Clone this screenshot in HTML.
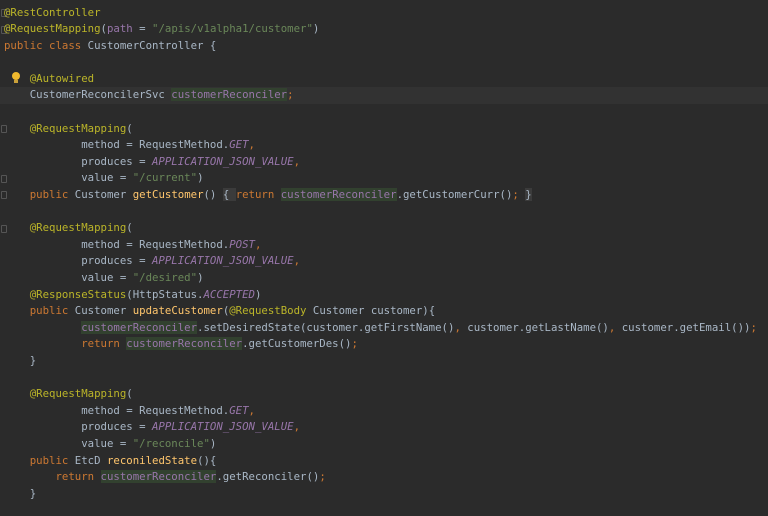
<!DOCTYPE html>
<html><head><meta charset="utf-8"><style>
html,body{margin:0;padding:0;background:#2b2b2b;width:768px;height:516px;overflow:hidden}
pre{position:absolute;left:4px;top:4.5px;margin:0;font-family:"DejaVu Sans Mono","Liberation Mono",monospace;font-size:10.7px;line-height:16.6px;color:#a9b7c6;white-space:pre}
.k{color:#cc7832}.a{color:#bbb529}.s{color:#6a8759}.f{color:#9876aa}.fi{color:#9876aa;font-style:italic}.m{color:#ffc66d}
.h{background:#32412f}.g{background:#3b3b3b}
.cur{position:absolute;left:0;top:87px;width:768px;height:16.6px;background:#323232}
.bulb{position:absolute;left:12px;top:72px;width:8px;height:8px;border-radius:50%;background:#f0b92e}
.bulb:after{content:"";position:absolute;left:2px;top:8px;width:4px;height:3px;background:#c9a03a}
.fold{position:absolute;left:1px;width:4px;height:6px;border:1px solid #555;border-radius:1px}
</style></head><body>
<div class="cur"></div>
<div class="bulb"></div>
<div class="fold" style="top:9px"></div><div class="fold" style="top:26px"></div>
<div class="fold" style="top:125px"></div><div class="fold" style="top:175px"></div>
<div class="fold" style="top:191px"></div><div class="fold" style="top:225px"></div>
<pre><span class="a">@RestController</span>
<span class="a">@RequestMapping</span>(<span class="f">path</span> = <span class="s">"/apis/v1alpha1/customer"</span>)
<span class="k">public class</span> CustomerController {

    <span class="a">@Autowired</span>
    CustomerReconcilerSvc <span class="f h">customerReconciler</span><span class="k">;</span>

    <span class="a">@RequestMapping</span>(
            method = RequestMethod.<span class="fi">GET</span><span class="k">,</span>
            produces = <span class="fi">APPLICATION_JSON_VALUE</span><span class="k">,</span>
            value = <span class="s">"/current"</span>)
    <span class="k">public</span> Customer <span class="m">getCustomer</span>() <span class="g">{ </span><span class="k">return </span><span class="f h">customerReconciler</span>.getCustomerCurr()<span class="k">;</span> <span class="g">}</span>

    <span class="a">@RequestMapping</span>(
            method = RequestMethod.<span class="fi">POST</span><span class="k">,</span>
            produces = <span class="fi">APPLICATION_JSON_VALUE</span><span class="k">,</span>
            value = <span class="s">"/desired"</span>)
    <span class="a">@ResponseStatus</span>(HttpStatus.<span class="fi">ACCEPTED</span>)
    <span class="k">public</span> Customer <span class="m">updateCustomer</span>(<span class="a">@RequestBody</span> Customer customer){
            <span class="f h">customerReconciler</span>.setDesiredState(customer.getFirstName()<span class="k">,</span> customer.getLastName()<span class="k">,</span> customer.getEmail())<span class="k">;</span>
            <span class="k">return </span><span class="f h">customerReconciler</span>.getCustomerDes()<span class="k">;</span>
    }

    <span class="a">@RequestMapping</span>(
            method = RequestMethod.<span class="fi">GET</span><span class="k">,</span>
            produces = <span class="fi">APPLICATION_JSON_VALUE</span><span class="k">,</span>
            value = <span class="s">"/reconcile"</span>)
    <span class="k">public</span> EtcD <span class="m">reconiledState</span>(){
        <span class="k">return </span><span class="f h">customerReconciler</span>.getReconciler()<span class="k">;</span>
    }</pre>
</body></html>
